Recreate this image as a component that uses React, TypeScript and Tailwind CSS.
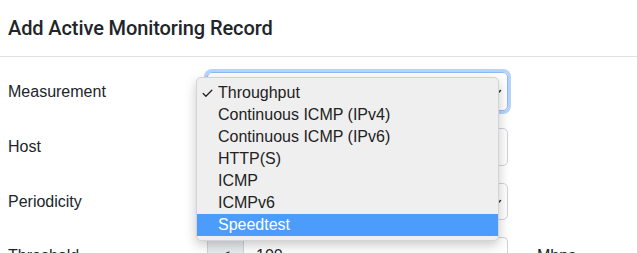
import { Check } from "lucide-react";

const options = [
  "Throughput",
  "Continuous ICMP (IPv4)",
  "Continuous ICMP (IPv6)",
  "HTTP(S)",
  "ICMP",
  "ICMPv6",
  "Speedtest",
];

const Chevron = () => (
  <svg width="10" height="10" viewBox="0 0 10 10" className="absolute right-[5px] top-1/2 -translate-y-1/2">
    <path d="M1.5 3.5 L5 7 L8.5 3.5" fill="none" stroke="#333" strokeWidth="1.6" strokeLinecap="round" />
  </svg>
);

const App = () => {
  return (
    <div
      className="relative w-[637px] h-[253px] overflow-hidden bg-white text-[#212529]"
      style={{ fontFamily: '"Liberation Sans", Arial, sans-serif' }}
    >
      {/* Header */}
      <div className="h-[57px] border-b border-[#dee2e6] px-2 flex items-center">
        <h5
          className="text-[20px] font-medium leading-none tracking-[-0.1px]"
          style={{ fontFamily: 'Roboto, "Liberation Sans", sans-serif' }}
        >
          Add Active Monitoring Record
        </h5>
      </div>

      {/* Body */}
      <div className="pt-[15px] px-2 flex flex-col gap-[17px] text-[16px]">
        <div className="flex items-center">
          <label className="w-[199px]">Measurement</label>
          <div className="relative w-[301px] h-[39px] rounded-[5px] border border-[#8cbcf5] ring-[3px] ring-[#b6d4fa]">
            <Chevron />
          </div>
        </div>

        <div className="flex items-center">
          <label className="w-[199px]">Host</label>
          <div className="w-[301px] h-[38px] rounded-[5px] border border-[#ced4da]" />
        </div>

        <div className="flex items-center">
          <label className="w-[199px]">Periodicity</label>
          <div className="relative w-[301px] h-[37px] rounded-[5px] border border-[#ced4da]">
            <Chevron />
          </div>
        </div>

        <div className="flex items-center">
          <label className="w-[199px]">Threshold</label>
          <div className="flex w-[301px] h-[38px]">
            <div className="w-[37px] flex items-center justify-center bg-[#e9ecef] border border-[#ced4da] rounded-l-[5px]">
              &lt;
            </div>
            <div className="flex-1 flex items-center px-3 border border-l-0 border-[#ced4da] rounded-r-[5px]">100</div>
          </div>
          <span className="ml-[29px]">Mbps</span>
        </div>
      </div>

      {/* Open select menu */}
      <div className="absolute left-[196px] top-[77px] w-[303px] py-1 rounded-[5px] bg-[#efefef] border border-[#d4d4d4] shadow-[0_4px_12px_rgba(0,0,0,0.22)] text-[16px] text-[#222]">
        {options.map((opt, i) => (
          <div
            key={opt}
            className={
              "relative h-[22px] flex items-center pl-[21px] " +
              (i === options.length - 1 ? "bg-[#4c9dfb] text-white" : "")
            }
          >
            {i === 0 && <Check size={13} strokeWidth={2.4} className="absolute left-[4px] top-[5px]" />}
            {opt}
          </div>
        ))}
      </div>
    </div>
  );
};

export default App;
